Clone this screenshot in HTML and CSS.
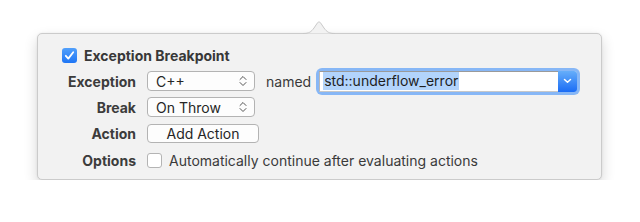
FILE: index.html
```html
<!DOCTYPE html>
<html>
<head>
<meta charset="utf-8">
<link rel="stylesheet" href="styles.css">
</head>
<body>
<div class="popover">
  <svg class="arrow" width="32" height="17" viewBox="0 0 32 17">
    <path d="M0 16.5 C6 16.5 8 15 11 11 L14 6.5 C15 4.5 17 4.5 18 6.5 L21 11 C24 15 26 16.5 32 16.5" fill="#f2f2f2" stroke="#c9c9c9" stroke-width="1"/>
  </svg>
  <div class="header">
    <span class="check on">
      <svg width="15" height="15" viewBox="0 0 15 15"><path d="M3.8 7.8 L6.3 10.6 L11.2 4.3" fill="none" stroke="#fff" stroke-width="1.8" stroke-linecap="round" stroke-linejoin="round"/></svg>
    </span>
    <span class="title">Exception Breakpoint</span>
  </div>
  <div class="form">
    <div class="label">Exception</div>
    <div class="ctrl">
      <div class="popup"><span>C++</span><svg class="updown" width="8" height="12" viewBox="0 0 8 12"><path d="M1 4.5 L4 1.5 L7 4.5 M1 7.5 L4 10.5 L7 7.5" fill="none" stroke="#555" stroke-width="1" stroke-linecap="round" stroke-linejoin="round"/></svg></div>
      <span class="named">named</span>
      <div class="combo">
        <div class="field"><span class="sel">std::underflow_error</span></div>
        <div class="drop"><svg width="9" height="6" viewBox="0 0 9 6"><path d="M1.5 1.5 L4.5 4.3 L7.5 1.5" fill="none" stroke="#fff" stroke-width="1.5" stroke-linecap="round" stroke-linejoin="round"/></svg></div>
      </div>
    </div>
    <div class="label">Break</div>
    <div class="ctrl">
      <div class="popup"><span>On Throw</span><svg class="updown" width="8" height="12" viewBox="0 0 8 12"><path d="M1 4.5 L4 1.5 L7 4.5 M1 7.5 L4 10.5 L7 7.5" fill="none" stroke="#555" stroke-width="1" stroke-linecap="round" stroke-linejoin="round"/></svg></div>
    </div>
    <div class="label">Action</div>
    <div class="ctrl">
      <div class="button">Add Action</div>
    </div>
    <div class="label">Options</div>
    <div class="ctrl">
      <span class="check off"></span>
      <span class="opt">Automatically continue after evaluating actions</span>
    </div>
  </div>
</div>
</body>
</html>
```
FILE: styles.css
```css
html, body {
  margin: 0;
  padding: 0;
  background: #ffffff;
}
body {
  font-family: "Inter", "Liberation Sans", sans-serif;
  font-size: 14px;
  color: #3a3a3a;
  padding: 33px 0 0 37px;
}
.popover {
  position: relative;
  width: 565px;
  height: 147px;
  box-sizing: border-box;
  background: #f2f2f2;
  border: 1px solid #cbcbcb;
  border-radius: 5px;
  box-shadow: 0 6px 14px rgba(0,0,0,0.16), 0 0 2px rgba(0,0,0,0.08);
  padding: 13px 0 0 24px;
}
.arrow {
  position: absolute;
  left: 265px;
  top: -17px;
}
.header {
  display: flex;
  align-items: center;
  height: 16px;
  gap: 7px;
}
.title {
  font-weight: 700;
  color: #383838;
}
.check {
  display: inline-flex;
  width: 15px;
  height: 15px;
  box-sizing: border-box;
  border-radius: 3px;
  flex: none;
}
.check.on {
  background: linear-gradient(#52a0fb, #1f76f5);
}
.check.off {
  background: #ffffff;
  border: 1px solid #b4b4b4;
}
.form {
  display: grid;
  grid-template-columns: 74px auto;
  grid-template-rows: 26px 26px 27px 26px;
  column-gap: 11px;
  margin-top: 5px;
}
.label {
  font-weight: 700;
  text-align: right;
  align-self: center;
  color: #3c3c3c;
}
.ctrl {
  display: flex;
  align-items: center;
}
.popup {
  display: flex;
  align-items: center;
  justify-content: space-between;
  box-sizing: border-box;
  width: 108px;
  height: 20px;
  padding: 0 7px 0 8px;
  background: #fdfdfd;
  border: 1px solid #b3b3b3;
  border-radius: 4px;
  color: #262626;
}
.updown {
  display: block;
}
.named {
  margin-left: 11px;
  color: #3a3a3a;
}
.combo {
  display: flex;
  margin-left: 8px;
  width: 258px;
  height: 21px;
  border-radius: 3px;
  box-shadow: 0 0 0 3px #87b7f6;
}
.field {
  flex: 1;
  background: #ffffff;
  border-top: 1px solid #9a9a9a;
  border-left: 1px solid #b8b8b8;
  border-bottom: 1px solid #c8c8c8;
  display: flex;
  align-items: center;
  padding-left: 3px;
  color: #1e1e1e;
}
.sel {
  background: #b2d4fc;
  line-height: 18px;
  padding: 0 1px;
}
.drop {
  width: 19px;
  border-radius: 0 3px 3px 0;
  background: linear-gradient(#66aefa, #1a6cf5);
  display: flex;
  align-items: center;
  justify-content: center;
}
.button {
  box-sizing: border-box;
  width: 112px;
  height: 19px;
  border: 1px solid #b3b3b3;
  border-radius: 4px;
  background: #fdfdfd;
  text-align: center;
  line-height: 17px;
  color: #262626;
}
.opt {
  margin-left: 7px;
  color: #3a3a3a;
}
```
